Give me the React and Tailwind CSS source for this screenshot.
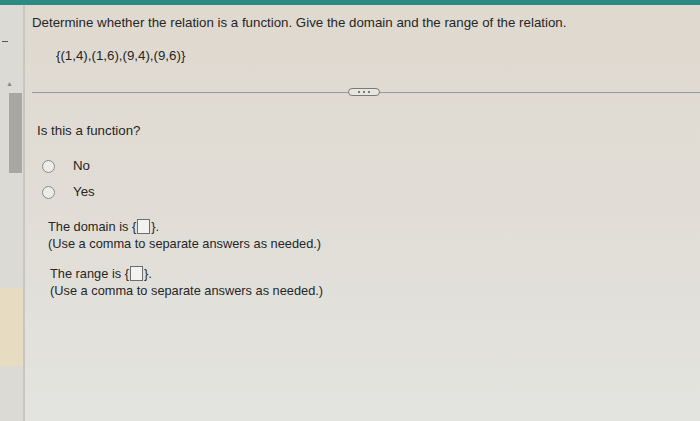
import React from "react";

const Radio = ({ label }) => (
  <label className="flex items-center gap-[18px] h-[26px]">
    <span className="w-[13px] h-[13px] rounded-full border border-[#8a8a88] bg-[#ecebe6]" />
    <span>{label}</span>
  </label>
);

const AnswerBox = () => (
  <span className="inline-block align-[-3px] w-[13px] h-[15px] border border-[#6d6d6d] bg-[#f2f2f0] mx-[1px]" />
);

export default function App() {
  return (
    <div
      className="w-[700px] h-[421px] overflow-hidden flex flex-col text-[#262626] text-[13.3px]"
      style={{ fontFamily: '"Liberation Sans", Arial, sans-serif' }}
    >
      <div className="h-[5px] bg-[#2b8a82]" />
      <div className="flex flex-1 bg-gradient-to-b from-[#dfd9cf] via-[#e1ddd6] to-[#e3e4e0]">
        {/* left rail */}
        <div className="w-[25px] shrink-0 flex flex-col border-r-2 border-[#c8c6c1] bg-[#dcdad4]">
          <div className="h-[36px]" />
          <div className="ml-[2px] w-[6px] h-[1px] bg-[#555]" />
          <div className="h-[38px]" />
          <div className="ml-[6px] text-[7px] leading-none text-[#888]">▲</div>
          <div className="h-[6px]" />
          <div className="ml-[9px] w-[13px] h-[80px] bg-[#a9a7a3]" />
          <div className="h-[115px]" />
          <div className="w-full h-[78px] bg-[#e7dcc2]" />
        </div>

        {/* content */}
        <div className="flex-1 flex flex-col pt-[10px]">
          <p className="pl-[7px] leading-[16px]">
            Determine whether the relation is a function. Give the domain and the range of the relation.
          </p>
          <p className="pl-[31px] mt-[17px] leading-[16px]">{"{(1,4),(1,6),(9,4),(9,6)}"}</p>

          <div className="mt-[24px] ml-[7px] flex items-center">
            <div className="w-[316px] h-[1px] bg-[#9a9894]" />
            <div className="w-[32px] h-[8px] rounded-full border border-[#7c7b78] bg-[#e8e6e0] flex items-center justify-center gap-[3px]">
              <span className="w-[2px] h-[2px] rounded-full bg-[#555]" />
              <span className="w-[2px] h-[2px] rounded-full bg-[#555]" />
              <span className="w-[2px] h-[2px] rounded-full bg-[#555]" />
            </div>
            <div className="flex-1 h-[1px] bg-[#9a9894]" />
          </div>

          <p className="pl-[12px] mt-[27px] leading-[16px]">Is this a function?</p>

          <div className="pl-[17px] mt-[14px] flex flex-col">
            <Radio label="No" />
            <Radio label="Yes" />
          </div>

          <div className="pl-[23px] mt-[13px] leading-[17px] text-[12.8px]">
            <p>
              The domain is {"{"}
              <AnswerBox />
              {"}."}
            </p>
            <p>(Use a comma to separate answers as needed.)</p>
          </div>

          <div className="pl-[25px] mt-[13px] leading-[17px] text-[12.8px]">
            <p>
              The range is {"{"}
              <AnswerBox />
              {"}."}
            </p>
            <p>(Use a comma to separate answers as needed.)</p>
          </div>
        </div>
      </div>
    </div>
  );
}
